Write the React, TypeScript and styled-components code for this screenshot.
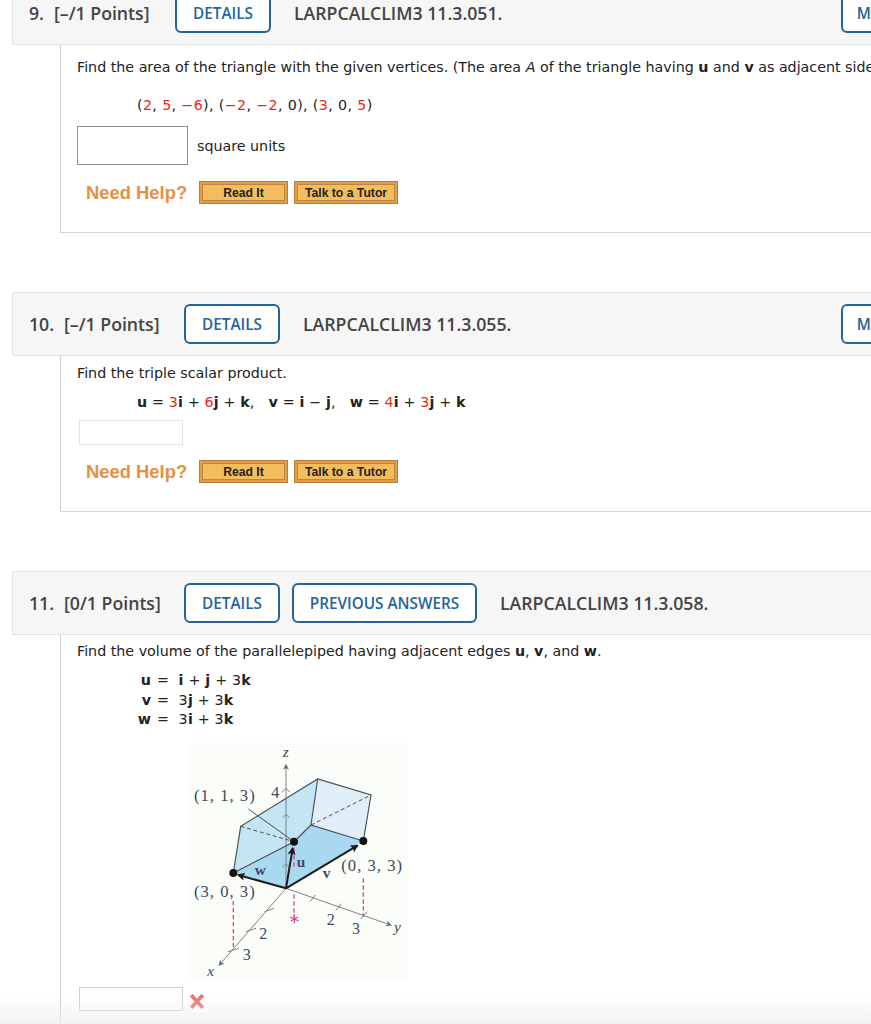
import React from "react";
import styled, { createGlobalStyle } from "styled-components";

const Global = createGlobalStyle`
  html, body { margin: 0; padding: 0; background: #fff; overflow: hidden; }
  #root { width: 871px; height: 1024px; overflow: hidden; position: relative; }
`;

const Page = styled.div`
  width: 960px;
  margin-top: -19px;
  padding: 0 10px 0 12px;
  box-sizing: border-box;
  font-family: "DejaVu Sans", Verdana, sans-serif;
  font-size: 14.25px;
  color: #222;
`;

const Question = styled.section`
  margin-bottom: 59px;
`;

const Header = styled.header`
  height: 64px;
  box-sizing: border-box;
  display: flex;
  align-items: center;
  padding-left: 16px;
  background: #f6f6f6;
  border: 1px solid #e2e2e2;
  border-radius: 2px;
  font-family: "Open Sans", sans-serif;
  font-weight: 600;
  font-size: 17.7px;
  color: #444;
  white-space: nowrap;
`;

const Num = styled.span<{ $w: number }>`
  width: ${(p) => p.$w}px;
`;

const Points = styled.span<{ $w: number }>`
  width: ${(p) => p.$w}px;
`;

const OutlineButton = styled.span<{ $w: number; $gap?: number }>`
  width: ${(p) => p.$w}px;
  height: 40px;
  box-sizing: border-box;
  margin-right: ${(p) => p.$gap ?? 23}px;
  flex: none;
  display: flex;
  align-items: center;
  justify-content: center;
  border: 2px solid #24649b;
  border-radius: 6px;
  font-size: 15.3px;
  color: #24649b;
  background: #fff;
`;

const Spacer = styled.span`
  flex: 1;
`;

const Title = styled.span`
  color: #444;
`;

const Body = styled.div<{ $h: number; $pt: number; $open?: boolean }>`
  margin-left: 48px;
  height: ${(p) => p.$h}px;
  box-sizing: border-box;
  padding: ${(p) => p.$pt}px 0 0 16px;
  border-left: 1px solid #cfcfcf;
  border-bottom: ${(p) => (p.$open ? "none" : "1px solid #d6d6d6")};
  white-space: nowrap;
`;

const Line = styled.div<{ $mb?: number; $ml?: number; $ls?: number }>`
  line-height: 20px;
  margin-bottom: ${(p) => p.$mb ?? 0}px;
  margin-left: ${(p) => p.$ml ?? 0}px;
  letter-spacing: ${(p) => p.$ls ?? 0}px;
`;

const Red = styled.span`
  color: #e8281e;
`;

const AnswerRow = styled.div`
  display: flex;
  align-items: center;
  gap: 9px;
`;

const Input = styled.div<{ $w: number; $h: number; $c: string; $ml?: number }>`
  width: ${(p) => p.$w}px;
  height: ${(p) => p.$h}px;
  box-sizing: border-box;
  margin-left: ${(p) => p.$ml ?? 0}px;
  border: 1px solid ${(p) => p.$c};
  background: #fff;
`;

const Help = styled.div<{ $mt: number }>`
  display: flex;
  align-items: center;
  margin: ${(p) => p.$mt}px 0 0 9px;
  height: 23px;
  font-family: "Liberation Sans", Arial, sans-serif;
`;

const HelpLabel = styled.span`
  width: 113px;
  font-size: 18.4px;
  font-weight: 700;
  color: #e38b3c;
  opacity: 0.95;
`;

const HelpButton = styled.span<{ $w: number }>`
  width: ${(p) => p.$w}px;
  height: 23px;
  margin-right: 6px;
  box-sizing: border-box;
  display: flex;
  align-items: center;
  justify-content: center;
  border: 3px solid #e89a45;
  outline: 1px solid #b57f3e;
  outline-offset: -1px;
  box-shadow: inset 0 0 0 1px #b98745;
  background: #f4bd5c;
  font-size: 12.2px;
  font-weight: 700;
  color: #222;
`;

const Vectors = styled.div`
  display: grid;
  grid-template-columns: 74px auto;
  column-gap: 6px;
  line-height: 19.5px;
  margin-top: 10px;
`;

const VecName = styled.b`
  text-align: right;
`;

const VecValue = styled.span`
  white-space: pre;
  letter-spacing: 0.2px;
`;

const Figure = styled.svg`
  display: block;
  width: 250px;
  height: 250px;
  margin: 5px 0 0 93px;
`;

const FinalRow = styled.div`
  display: flex;
  align-items: center;
  gap: 7px;
  margin-top: 2px;
`;

const CrossIcon = styled.svg`
  margin-top: 5px;
`;

const Fade = styled.div`
  position: absolute;
  left: 0;
  right: 0;
  bottom: 0;
  height: 30px;
  pointer-events: none;
  background: linear-gradient(to bottom, rgba(240, 240, 240, 0), rgba(238, 238, 238, 0.75));
`;

const serif = { fontFamily: '"Liberation Serif", serif', fill: "#3d4a5f" } as const;

const ParallelepipedFigure = () => (
  <Figure viewBox="0 0 750 750" role="img" aria-label="Parallelepiped">
    <defs>
      <marker id="ah" viewBox="0 0 10 10" refX="8" refY="5" markerWidth="6" markerHeight="6" orient="auto-start-reverse">
        <path d="M0 0L10 5L0 10L3 5Z" fill="#6b6f75" />
      </marker>
      <marker id="ab" viewBox="0 0 10 10" refX="8" refY="5" markerWidth="4" markerHeight="4" orient="auto-start-reverse">
        <path d="M0 0L10 5L0 10L2 5Z" fill="#1c1c1c" />
      </marker>
    </defs>
    <rect x="60" y="24" width="654" height="711" fill="#fbfdf8" />
    <path d="M443 132L603 180L580 318L423 270Z" fill="#e0eef7" />
    <path d="M190 414L212 274L443 132L423 270L372 320Z" fill="#c4e5f4" />
    <path d="M190 414L348 460L580 318L423 270L372 320Z" fill="#a9d9f0" />
    <g stroke="#7d8284" strokeWidth="3" fill="none">
      <path d="M348 460L348 90" markerEnd="url(#ah)" />
      <path d="M348 460L148 690" markerEnd="url(#ah)" />
      <path d="M348 460L662 570" markerEnd="url(#ah)" />
      <path d="M336 172L348 160L360 172M338 248L348 238L358 248M338 396L348 386L358 396" />
      <path d="M284 530L312 520M228 590L258 580M174 650L206 640" />
      <path d="M420 500L436 480M498 526L514 506M572 552L592 530" />
    </g>
    <g stroke="#4a5052" strokeWidth="3.5" fill="none">
      <path d="M190 414L212 274L443 132L603 180L580 318" />
      <path d="M443 132L423 270L580 318M423 270L372 320L190 414" />
      <path d="M235 222L372 320" strokeWidth="3" />
      <path d="M212 274L372 320M423 270L603 180" strokeDasharray="12 8" strokeWidth="3" />
    </g>
    <g stroke="#d9479a" strokeWidth="4" fill="none" strokeDasharray="13 8">
      <path d="M190 498L190 640" />
      <path d="M372 340L372 400M372 478L372 545" />
      <path d="M580 430L580 545" />
    </g>
    <path d="M360 546L386 558M362 558L384 546M373 538L373 564" stroke="#d9479a" strokeWidth="4" fill="none" />
    <g stroke="#1c1c1c" strokeWidth="6" fill="none">
      <path d="M348 460L205 420" markerEnd="url(#ab)" />
      <path d="M348 460L562 332" markerEnd="url(#ab)" />
      <path d="M348 460L368 340" markerEnd="url(#ab)" />
    </g>
    <circle cx="190" cy="414" r="12" fill="#141414" />
    <circle cx="372" cy="320" r="12" fill="#141414" />
    <circle cx="580" cy="318" r="12" fill="#141414" />
    <g fontSize="50" letterSpacing="3" {...serif}>
      <text x="72" y="198">(1, 1, 3)</text>
      <text x="72" y="486">(3, 0, 3)</text>
      <text x="514" y="408">(0, 3, 3)</text>
    </g>
    <g fontSize="48" {...serif}>
      <text x="304" y="190">4</text>
      <text x="470" y="570">2</text>
      <text x="546" y="596">3</text>
      <text x="268" y="612">2</text>
      <text x="218" y="674">3</text>
    </g>
    <g fontSize="46" fontStyle="italic" {...serif}>
      <text x="338" y="66">z</text>
      <text x="672" y="590">y</text>
      <text x="112" y="722">x</text>
    </g>
    <g fontSize="46" fontWeight="700" {...serif}>
      <text x="254" y="420">w</text>
      <text x="380" y="396">u</text>
      <text x="458" y="430">v</text>
    </g>
  </Figure>
);

const Cross = () => (
  <CrossIcon width="14" height="15" viewBox="0 0 14 15" aria-label="Incorrect">
    <path d="M2.5 2.5L11.5 12.5M11.5 2.5L2.5 12.5" stroke="#e96a68" strokeWidth="3.6" strokeLinecap="square" />
  </CrossIcon>
);

const NeedHelp = ({ mt }: { mt: number }) => (
  <Help $mt={mt}>
    <HelpLabel>Need Help?</HelpLabel>
    <HelpButton $w={89}>Read It</HelpButton>
    <HelpButton $w={104}>Talk to a Tutor</HelpButton>
  </Help>
);

export default function App() {
  return (
    <>
      <Global />
      <Page>
        <Question>
          <Header>
            <Num $w={25}>9.</Num>
            <Points $w={121}>[–/1 Points]</Points>
            <OutlineButton $w={96}>DETAILS</OutlineButton>
            <Title>LARPCALCLIM3 11.3.051.</Title>
            <Spacer />
            <OutlineButton $w={108} $gap={0}>MY NOTES</OutlineButton>
          </Header>
          <Body $h={188} $pt={12}>
            <Line $mb={18}>
              Find the area of the triangle with the given vertices. (The area <i>A</i> of the triangle having <b>u</b> and <b>v</b> as adjacent sides
            </Line>
            <Line $mb={11} $ml={60} $ls={0.36}>
              (<Red>2</Red>, <Red>5</Red>, <Red>−6</Red>), (<Red>−2</Red>, <Red>−2</Red>, 0), (<Red>3</Red>, 0, <Red>5</Red>)
            </Line>
            <AnswerRow>
              <Input $w={111} $h={39} $c="#8e8e8e" />
              <span>square units</span>
            </AnswerRow>
            <NeedHelp mt={16} />
          </Body>
        </Question>

        <Question>
          <Header>
            <Num $w={35}>10.</Num>
            <Points $w={120}>[–/1 Points]</Points>
            <OutlineButton $w={96}>DETAILS</OutlineButton>
            <Title>LARPCALCLIM3 11.3.055.</Title>
            <Spacer />
            <OutlineButton $w={108} $gap={0}>MY NOTES</OutlineButton>
          </Header>
          <Body $h={156} $pt={7}>
            <Line $mb={9}>Find the triple scalar product.</Line>
            <Line $mb={8} $ml={60} $ls={0.15}>
              <b>u</b> = <Red>3</Red><b>i</b> + <Red>6</Red><b>j</b> + <b>k</b>,&nbsp;&nbsp; <b>v</b> = <b>i</b> − <b>j</b>,&nbsp;&nbsp; <b>w</b> = <Red>4</Red><b>i</b> + <Red>3</Red><b>j</b> + <b>k</b>
            </Line>
            <Input $w={104} $h={25} $c="#e2e2e2" $ml={2} />
            <NeedHelp mt={15} />
          </Body>
        </Question>

        <Question>
          <Header>
            <Num $w={35}>11.</Num>
            <Points $w={120}>[0/1 Points]</Points>
            <OutlineButton $w={96} $gap={12}>DETAILS</OutlineButton>
            <OutlineButton $w={185}>PREVIOUS ANSWERS</OutlineButton>
            <Title>LARPCALCLIM3 11.3.058.</Title>
          </Header>
          <Body $h={400} $pt={6} $open>
            <Line>
              Find the volume of the parallelepiped having adjacent edges <b>u</b>, <b>v</b>, and <b>w</b>.
            </Line>
            <Vectors>
              <VecName>u</VecName>
              <VecValue>=  <b>i</b> + <b>j</b> + 3<b>k</b></VecValue>
              <VecName>v</VecName>
              <VecValue>=  3<b>j</b> + 3<b>k</b></VecValue>
              <VecName>w</VecName>
              <VecValue>=  3<b>i</b> + 3<b>k</b></VecValue>
            </Vectors>
            <ParallelepipedFigure />
            <FinalRow>
              <Input $w={104} $h={24} $c="#cfcfcf" $ml={2} />
              <Cross />
            </FinalRow>
          </Body>
        </Question>
      </Page>
      <Fade />
    </>
  );
}
